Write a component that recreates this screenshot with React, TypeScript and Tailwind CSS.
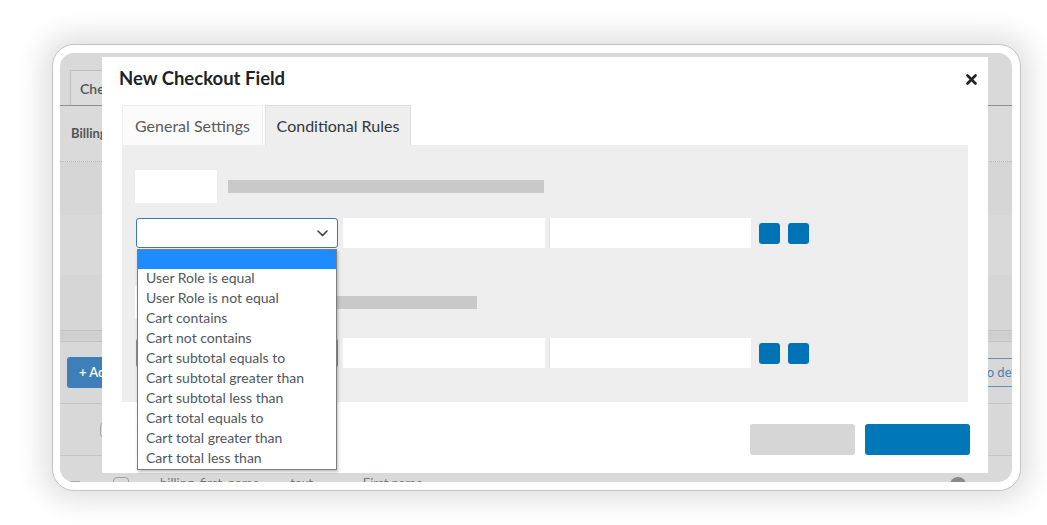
import React from 'react';

const ruleOptions = [
  'User Role is equal',
  'User Role is not equal',
  'Cart contains',
  'Cart not contains',
  'Cart subtotal equals to',
  'Cart subtotal greater than',
  'Cart subtotal less than',
  'Cart total equals to',
  'Cart total greater than',
  'Cart total less than',
];

function Chevron() {
  return (
    <svg width="11" height="7" viewBox="0 0 11 7" fill="none">
      <path d="M1 1l4.5 4.5L10 1" stroke="#3c434a" strokeWidth="1.6" strokeLinecap="round" strokeLinejoin="round" />
    </svg>
  );
}

function CloseIcon() {
  return (
    <svg width="11" height="11" viewBox="0 0 11 11" fill="none">
      <path d="M1.5 1.5l8 8M9.5 1.5l-8 8" stroke="#1d2327" strokeWidth="2.6" strokeLinecap="round" />
    </svg>
  );
}

function RuleHeader({ bar }: { bar: string }) {
  return (
    <div className="flex items-center">
      <div className="h-[33px] w-[82px] bg-white" />
      <div className={`ml-[11px] h-[13px] bg-[#c9c9c9] ${bar}`} />
    </div>
  );
}

function RuleRow({ active }: { active?: boolean }) {
  return (
    <div className="flex h-[30px] items-center">
      <div
        className={
          active
            ? 'ml-[1px] flex h-[30px] w-[202px] items-center justify-end rounded-[3px] border border-[#3a76b0] bg-white pr-[9px]'
            : 'ml-[1px] h-[30px] w-[202px] rounded-[3px] border border-[#8c8f94] bg-white'
        }
      >
        {active && <Chevron />}
      </div>
      <div className="ml-[5px] h-[30px] w-[202px] bg-white" />
      <div className="ml-[4px] h-[30px] w-[202px] border-l border-[#e2e2e2] bg-white" />
      <div className="ml-[8px] h-[21px] w-[21px] rounded-[3px] bg-[#0073b7]" />
      <div className="ml-[8px] h-[21px] w-[21px] rounded-[3px] bg-[#0073b7]" />
    </div>
  );
}

function AdminBackdrop() {
  return (
    <div className="flex h-full flex-col text-[#555]">
      <div className="h-[53px] shrink-0 border-b border-[#8e8e8e] bg-[#d9d9d9] pl-[10px] pt-[17px]">
        <div className="flex h-[35px] w-[150px] items-center border border-b-0 border-[#bdbdbd] bg-[#dcdcdc] pl-[9px] text-[14px] font-semibold">
          Checkout Fields
        </div>
      </div>
      <div className="flex h-[56px] shrink-0 items-center border-b border-dotted border-[#b9b9b9] bg-[#dadada] pl-[11px] text-[13px] font-bold">
        Billing Fields
      </div>
      <div className="h-[53px] shrink-0 bg-[#d6d6d6]" />
      <div className="h-[60px] shrink-0 bg-[#d9d9d9]" />
      <div className="h-[55px] shrink-0 bg-[#d6d6d6]" />
      <div className="h-[12px] shrink-0 border-y border-[#c2c2c2] bg-[#d0d0d0]" />
      <div className="flex h-[61px] shrink-0 items-center justify-between bg-[#d8d8d8] pl-[7px]">
        <div className="flex h-[31px] w-[110px] items-center rounded-[3px] bg-[#3e7fb9] pl-[12px] text-[13px] font-semibold text-white">
          + Add field
        </div>
        <div className="mr-[-69px] flex h-[29px] items-center border-y border-[#5f94bf] px-[10px] text-[13px] text-[#4f7fa8]">
          Reset to default fields
        </div>
      </div>
      <div className="flex h-[53px] shrink-0 items-center border-y border-[#c4c4c4] bg-[#d8d8d8] pl-[40px]">
        <div className="h-[16px] w-[16px] rounded-[4px] border border-[#a8a8a8]" />
      </div>
      <div className="flex min-h-0 flex-1 items-start overflow-hidden bg-[#d9d9d9] pt-[21px] text-[13px] leading-none text-[#7a7a7a]">
        <div className="ml-[10px] mt-[4px] h-[4px] w-[10px] bg-[#a6a6a6]" />
        <div className="ml-[33px] h-[16px] w-[16px] shrink-0 rounded-[4px] border border-[#a0a0a0]" />
        <span className="ml-[31px]">billing_first_name</span>
        <span className="ml-[31px]">text</span>
        <span className="ml-[50px]">First name</span>
        <div className="ml-auto mr-[46px] h-[16px] w-[16px] shrink-0 rounded-full bg-[#8a8a8a]" />
      </div>
    </div>
  );
}

export default function App() {
  return (
    <div className="h-[525px] w-[1047px] overflow-hidden bg-white pl-[52px] pt-[44px] font-['Lato','Open_Sans',sans-serif]">
      <div className="h-[447px] w-[969px] rounded-[22px] border border-[#c4c4c4] bg-white pb-[8px] pl-[7px] pr-[8px] pt-[8px] shadow-[0_0_28px_10px_rgba(0,0,0,0.12)]">
        <div className="relative h-full w-full overflow-hidden rounded-[14px]">
          <AdminBackdrop />

          <div className="absolute left-[42px] top-[4px] h-[416px] w-[886px] bg-white">
            <div className="flex h-[48px] items-start justify-between pl-[17px] pr-[11px] pt-[8px]">
              <h1 className="text-[18.5px] font-bold text-[#1d2327]">New Checkout Field</h1>
              <div className="mt-[9px]">
                <CloseIcon />
              </div>
            </div>

            <div className="ml-[20px] flex h-[40px] items-end">
              <div className="flex h-[40px] w-[141px] items-center justify-center border border-b-0 border-[#ededed] bg-[#fbfbfb] text-[16px] text-[#5a5a5a]">
                General Settings
              </div>
              <div className="ml-[2px] flex h-[40px] w-[146px] items-center justify-center border border-b-0 border-[#dcdcdc] bg-[#eeeeee] text-[16px] text-[#32373c]">
                Conditional Rules
              </div>
            </div>

            <div className="mx-[20px] h-[257px] bg-[#eeeeee] pl-[13px] pt-[25px]">
              <RuleHeader bar="w-[316px]" />
              <div className="mt-[15px]">
                <RuleRow active />
              </div>
              <div className="mt-[38px]">
                <RuleHeader bar="w-[249px]" />
              </div>
              <div className="mt-[19px]">
                <RuleRow />
              </div>
            </div>

            <div className="mt-[22px] flex justify-end gap-[10px] pr-[18px]">
              <div className="h-[31px] w-[105px] rounded-[3px] bg-[#d6d6d6]" />
              <div className="h-[31px] w-[105px] rounded-[3px] bg-[#0077b6]" />
            </div>

            <ul className="absolute left-[35px] top-[192px] w-[200px] border border-[#7d7d7d] bg-white text-[14px] text-[#50575e] shadow-[1px_2px_3px_rgba(0,0,0,0.25)]">
              <li className="h-[19px] bg-[#1e8cff]" />
              {ruleOptions.map((label) => (
                <li key={label} className="flex h-[20px] items-center pb-[4px] pl-[8px]">
                  {label}
                </li>
              ))}
            </ul>
          </div>
        </div>
      </div>
    </div>
  );
}
